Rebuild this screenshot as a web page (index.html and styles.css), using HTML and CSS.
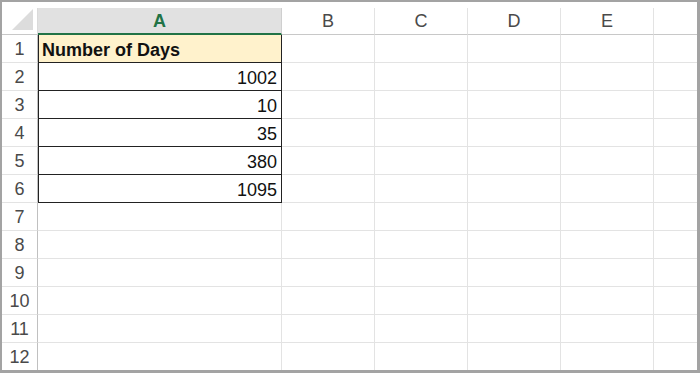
FILE: index.html
```html
<!DOCTYPE html>
<html>
<head>
    <link rel="stylesheet" href="styles.css">
</head>
<body>
    <div class="sheet">
        <div class="grid">
            <div class="corner"><span class="tri"></span></div>
            <div class="col-head active">A</div>
            <div class="col-head">B</div>
            <div class="col-head">C</div>
            <div class="col-head">D</div>
            <div class="col-head">E</div>
            <div class="col-head last"></div>

            <div class="row-head">1</div>
            <div class="cell boxed title">Number of Days</div>
            <div class="cell"></div><div class="cell"></div><div class="cell"></div><div class="cell"></div><div class="cell last"></div>

            <div class="row-head">2</div>
            <div class="cell boxed num">1002</div>
            <div class="cell"></div><div class="cell"></div><div class="cell"></div><div class="cell"></div><div class="cell last"></div>

            <div class="row-head">3</div>
            <div class="cell boxed num">10</div>
            <div class="cell"></div><div class="cell"></div><div class="cell"></div><div class="cell"></div><div class="cell last"></div>

            <div class="row-head">4</div>
            <div class="cell boxed num">35</div>
            <div class="cell"></div><div class="cell"></div><div class="cell"></div><div class="cell"></div><div class="cell last"></div>

            <div class="row-head">5</div>
            <div class="cell boxed num">380</div>
            <div class="cell"></div><div class="cell"></div><div class="cell"></div><div class="cell"></div><div class="cell last"></div>

            <div class="row-head">6</div>
            <div class="cell boxed num">1095</div>
            <div class="cell"></div><div class="cell"></div><div class="cell"></div><div class="cell"></div><div class="cell last"></div>

            <div class="row-head">7</div>
            <div class="cell"></div><div class="cell"></div><div class="cell"></div><div class="cell"></div><div class="cell"></div><div class="cell last"></div>

            <div class="row-head">8</div>
            <div class="cell"></div><div class="cell"></div><div class="cell"></div><div class="cell"></div><div class="cell"></div><div class="cell last"></div>

            <div class="row-head">9</div>
            <div class="cell"></div><div class="cell"></div><div class="cell"></div><div class="cell"></div><div class="cell"></div><div class="cell last"></div>

            <div class="row-head">10</div>
            <div class="cell"></div><div class="cell"></div><div class="cell"></div><div class="cell"></div><div class="cell"></div><div class="cell last"></div>

            <div class="row-head">11</div>
            <div class="cell"></div><div class="cell"></div><div class="cell"></div><div class="cell"></div><div class="cell"></div><div class="cell last"></div>

            <div class="row-head">12</div>
            <div class="cell"></div><div class="cell"></div><div class="cell"></div><div class="cell"></div><div class="cell"></div><div class="cell last"></div>
        </div>
    </div>
</body>
</html>
```

FILE: styles.css
```css
body {
    margin: 0;
    padding: 0;
    font-family: "Liberation Sans", Arial, sans-serif;
    background-color: #fff;
}
.sheet {
    width: 700px;
    height: 373px;
    box-sizing: border-box;
    border: 2px solid #a3a3a3;
    border-right-width: 3px;
    border-bottom-width: 3px;
    padding-top: 6px;
    overflow: hidden;
    background-color: #fff;
}
.grid {
    display: grid;
    grid-template-columns: 36px 244px 93px 93px 93px 93px 1fr;
    grid-template-rows: 27px repeat(12, 28px);
}
.grid > div {
    box-sizing: border-box;
}
.corner {
    position: relative;
    border-right: 1px solid #dadada;
    border-bottom: 1px solid #c8c8c8;
}
.tri {
    position: absolute;
    right: 4px;
    bottom: 4px;
    width: 0;
    height: 0;
    border-left: 21px solid transparent;
    border-bottom: 21px solid #dcdcdc;
}
.col-head {
    display: flex;
    align-items: center;
    justify-content: center;
    padding-top: 1px;
    font-size: 18px;
    color: #4a4a4a;
    border-right: 1px solid #e3e3e3;
    border-bottom: 1px solid #c8c8c8;
}
.col-head.active {
    background-color: #e1e1e1;
    color: #217346;
    font-weight: bold;
    border-right: 1px solid #cfcfcf;
    border-bottom: 2px solid #217346;
}
.col-head.last {
    border-right: none;
}
.row-head {
    display: flex;
    align-items: center;
    justify-content: center;
    padding-top: 2px;
    font-size: 18px;
    color: #4a4a4a;
    border-right: 1px solid #c0c0c0;
    border-bottom: 1px solid #e3e3e3;
}
.cell {
    display: flex;
    align-items: center;
    padding: 3px 4px 0 4px;
    font-size: 18px;
    color: #111;
    border-right: 1px solid #e3e3e3;
    border-bottom: 1px solid #e3e3e3;
}
.cell.last {
    border-right: none;
}
.boxed {
    border-right: 1px solid #222;
    border-bottom: 1px solid #222;
    box-shadow: inset 1px 0 #222;
}
.title {
    background-color: #fff2cc;
    font-weight: bold;
}
.num {
    justify-content: flex-end;
}
```
